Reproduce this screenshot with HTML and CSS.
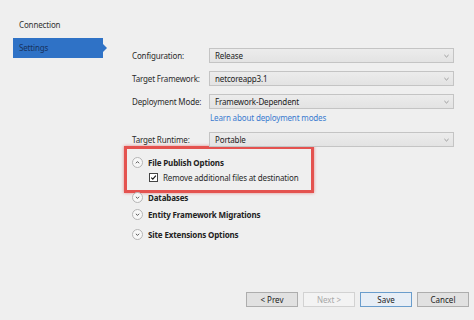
FILE: index.html
```html
<!DOCTYPE html>
<html lang="en">
<head>
  <meta charset="UTF-8">
  <title>Publish Settings</title>
  <link rel="stylesheet" href="styles.css">
</head>
<body>
  <div class="window">
    <div class="panes">
      <nav class="nav">
        <div class="nav-item">Connection</div>
        <div class="nav-item active">Settings</div>
      </nav>

      <main class="main">
        <div class="form">
          <label class="field-label">Configuration:</label>
          <div class="select">Release<svg class="caret" viewBox="0 0 6 4"><path d="M0.5 0.8 L3 3.2 L5.5 0.8" /></svg></div>

          <label class="field-label">Target Framework:</label>
          <div class="select">netcoreapp3.1<svg class="caret" viewBox="0 0 6 4"><path d="M0.5 0.8 L3 3.2 L5.5 0.8" /></svg></div>

          <label class="field-label">Deployment Mode:</label>
          <div class="select-group">
            <div class="select">Framework-Dependent<svg class="caret" viewBox="0 0 6 4"><path d="M0.5 0.8 L3 3.2 L5.5 0.8" /></svg></div>
            <a class="link" href="#">Learn about deployment modes</a>
          </div>

          <label class="field-label">Target Runtime:</label>
          <div class="select">Portable<svg class="caret" viewBox="0 0 6 4"><path d="M0.5 0.8 L3 3.2 L5.5 0.8" /></svg></div>
        </div>

        <div class="sections">
          <div class="section open">
            <div class="section-head">
              <span class="toggle"><svg viewBox="0 0 12 12"><path d="M3.8 7 L6 4.8 L8.2 7" /></svg></span>
              File Publish Options
            </div>
            <label class="check-row">
              <span class="checkbox"><svg viewBox="0 0 10 10"><path d="M1.8 5.2 L4 7.4 L8.4 2.2" /></svg></span>
              Remove additional files at destination
            </label>
          </div>
          <div class="section-head">
            <span class="toggle"><svg viewBox="0 0 12 12"><path d="M3.8 5 L6 7.2 L8.2 5" /></svg></span>
            Databases
          </div>
          <div class="section-head">
            <span class="toggle"><svg viewBox="0 0 12 12"><path d="M3.8 5 L6 7.2 L8.2 5" /></svg></span>
            Entity Framework Migrations
          </div>
          <div class="section-head spaced">
            <span class="toggle"><svg viewBox="0 0 12 12"><path d="M3.8 5 L6 7.2 L8.2 5" /></svg></span>
            Site Extensions Options
          </div>
        </div>
      </main>
    </div>

    <div class="buttons">
      <button class="btn">&lt; Prev</button>
      <button class="btn" disabled>Next &gt;</button>
      <button class="btn primary">Save</button>
      <button class="btn">Cancel</button>
    </div>
  </div>
</body>
</html>
```

FILE: styles.css
```css
html, body {
  margin: 0;
  padding: 0;
}

body {
  width: 474px;
  height: 320px;
  overflow: hidden;
  background: #efefef;
  font-family: "Noto Sans", sans-serif;
  font-size: 8px;
  letter-spacing: -0.15px;
  color: #2a2a2a;
}

.window {
  height: 320px;
  display: flex;
  flex-direction: column;
}

.panes {
  display: flex;
  flex: 1;
}

/* left navigation */
.nav {
  width: 110px;
  padding-top: 18px;
  box-sizing: border-box;
}

.nav-item {
  height: 20px;
  line-height: 14px;
  padding-left: 19px;
  color: #333;
}

.nav-item.active {
  position: relative;
  width: 90px;
  margin-left: 13px;
  padding-left: 6px;
  line-height: 20px;
  box-sizing: border-box;
  background: #2f72c6;
  color: #17325f;
}

.nav-item.active::after {
  content: "";
  position: absolute;
  right: -4px;
  top: 6px;
  border-top: 4px solid transparent;
  border-bottom: 4px solid transparent;
  border-left: 4px solid #2f72c6;
}

/* form */
.main {
  flex: 1;
  padding-left: 22px;
  padding-top: 48px;
}

.form {
  display: grid;
  grid-template-columns: 77px 245px;
  row-gap: 8px;
  align-items: start;
}

.field-label {
  line-height: 15px;
  color: #2a2a2a;
}

.select {
  position: relative;
  height: 15px;
  line-height: 13px;
  padding-left: 5px;
  box-sizing: border-box;
  border: 1px solid #c4c4c4;
  background: linear-gradient(#ececec, #e3e3e3);
  color: #222;
}

.caret {
  position: absolute;
  right: 4px;
  top: 5px;
  width: 5px;
  height: 4px;
  fill: none;
  stroke: #8a8a8a;
  stroke-width: 1;
}

.select-group {
  display: flex;
  flex-direction: column;
}

.link {
  padding: 2px 0 0 1px;
  line-height: 13px;
  color: #3a7bd0;
  text-decoration: none;
}

/* collapsible sections */
.sections {
  margin-top: -1px;
}

.section.open {
  width: 190px;
  height: 47px;
  margin-left: -8px;
  margin-bottom: -4px;
  padding: 5px 0 0 5px;
  box-sizing: border-box;
  border: 3px solid #e4524f;
  box-shadow: 0 0 3px rgba(220, 70, 70, 0.6);
  white-space: nowrap;
}

.section-head {
  display: flex;
  align-items: center;
  gap: 5px;
  height: 17px;
  font-weight: bold;
  color: #222;
}

.section-head.spaced {
  margin-top: 3px;
}

.toggle {
  width: 11px;
  height: 11px;
  border-radius: 50%;
  border: 1px solid #b5b5b5;
  background: #f7f7f7;
  box-sizing: border-box;
  display: flex;
}

.toggle svg {
  width: 9px;
  height: 9px;
  fill: none;
  stroke: #555;
  stroke-width: 1.3;
}

.check-row {
  display: flex;
  align-items: center;
  gap: 5px;
  margin-left: 17px;
  height: 12px;
  color: #2a2a2a;
}

.checkbox {
  width: 9px;
  height: 9px;
  border: 1px solid #444;
  background: #fff;
  box-sizing: border-box;
  display: flex;
}

.checkbox svg {
  width: 7px;
  height: 7px;
  fill: none;
  stroke: #111;
  stroke-width: 1.6;
}

/* bottom buttons */
.buttons {
  display: flex;
  justify-content: flex-end;
  gap: 5px;
  padding: 0 5px 13px 0;
}

.btn {
  width: 52px;
  height: 15px;
  padding: 0;
  font-family: inherit;
  font-size: 8px;
  color: #222;
  background: #e1e1e1;
  border: 1px solid #adadad;
}

.btn:disabled {
  color: #a8a8a8;
  background: #f3f3f3;
  border-color: #d2d2d2;
}

.btn.primary {
  background: #e7eef6;
  border-color: #6a9dcc;
}
```
